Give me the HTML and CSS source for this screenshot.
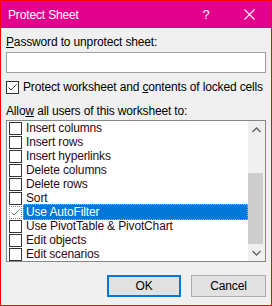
FILE: index.html
```html
<!DOCTYPE html>
<html>
<head>
    <meta charset="UTF-8">
    <title>Protect Sheet</title>
    <link rel="stylesheet" href="styles.css">
</head>
<body>
    <div class="dialog">
        <div class="titlebar">
            <span class="title">Protect Sheet</span>
            <span class="help">?</span>
            <svg class="close" width="11" height="11" viewBox="0 0 11 11">
                <path d="M0.5 0.5 L10.5 10.5 M10.5 0.5 L0.5 10.5" stroke="#fff" stroke-width="1.1" fill="none"/>
            </svg>
        </div>

        <div class="content">
            <div class="label"><u>P</u>assword to unprotect sheet:</div>
            <input class="password" type="password">

            <div class="check-row">
                <span class="box">
                    <svg width="11" height="11" viewBox="0 0 11 11"><path d="M1.5 5.5 L4 8 L9.5 2.5" stroke="#444" stroke-width="1" fill="none"/></svg>
                </span>
                <span>Protect worksheet and <u>c</u>ontents of locked cells</span>
            </div>

            <div class="label allow">Allo<u>w</u> all users of this worksheet to:</div>

            <div class="listbox">
                <div class="items">
                    <div class="item"><span class="box"></span><span class="text">Insert columns</span></div>
                    <div class="item"><span class="box"></span><span class="text">Insert rows</span></div>
                    <div class="item"><span class="box"></span><span class="text">Insert hyperlinks</span></div>
                    <div class="item"><span class="box"></span><span class="text">Delete columns</span></div>
                    <div class="item"><span class="box"></span><span class="text">Delete rows</span></div>
                    <div class="item"><span class="box"></span><span class="text">Sort</span></div>
                    <div class="item selected">
                        <span class="box">
                            <svg width="11" height="11" viewBox="0 0 11 11"><path d="M1.5 5.5 L4 8 L9.5 2.5" stroke="#777" stroke-width="1" fill="none"/></svg>
                        </span>
                        <span class="text">Use AutoFilter</span>
                    </div>
                    <div class="item"><span class="box"></span><span class="text">Use PivotTable &amp; PivotChart</span></div>
                    <div class="item"><span class="box"></span><span class="text">Edit objects</span></div>
                    <div class="item"><span class="box"></span><span class="text">Edit scenarios</span></div>
                </div>
                <div class="scrollbar">
                    <div class="arrow">
                        <svg width="9" height="6" viewBox="0 0 9 6"><path d="M0.5 5 L4.5 1 L8.5 5" stroke="#606060" stroke-width="1.3" fill="none"/></svg>
                    </div>
                    <div class="track"><div class="thumb"></div></div>
                    <div class="arrow">
                        <svg width="9" height="6" viewBox="0 0 9 6"><path d="M0.5 1 L4.5 5 L8.5 1" stroke="#606060" stroke-width="1.3" fill="none"/></svg>
                    </div>
                </div>
            </div>

            <div class="buttons">
                <button class="btn default">OK</button>
                <button class="btn">Cancel</button>
            </div>
        </div>
    </div>
</body>
</html>
```

FILE: styles.css
```css
body {
    margin: 0;
    font-family: "Liberation Sans", Arial, sans-serif;
    font-size: 12px;
    letter-spacing: -0.15px;
    color: #000;
}
.dialog {
    width: 272px;
    height: 306px;
    box-sizing: border-box;
    border: 1px solid #f00;
    background: #f0f0f0;
    overflow: hidden;
}
.titlebar {
    height: 27px;
    background: #e3008c;
    color: #fff;
    display: flex;
    align-items: center;
    padding: 0 16px 0 7px;
}
.title {
    flex: 1;
}
.help {
    width: 10px;
    text-align: center;
    margin-right: 33px;
    font-size: 13px;
}
.close {
    display: block;
}
.content {
    padding: 6px 5px 0 5px;
}
.label {
    line-height: 16px;
    white-space: nowrap;
}
.password {
    display: block;
    width: 100%;
    height: 21px;
    box-sizing: border-box;
    margin: 2px 0 0 0;
    border: 1px solid #a0a0a0;
    background: #fff;
}
.check-row {
    display: flex;
    align-items: center;
    line-height: 16px;
    margin-top: 6px;
    white-space: nowrap;
}
.check-row .box {
    margin-right: 4px;
}
.box {
    width: 13px;
    height: 13px;
    box-sizing: border-box;
    border: 1px solid #333;
    background: #fff;
    display: flex;
    align-items: center;
    justify-content: center;
    flex-shrink: 0;
}
.box svg {
    display: block;
}
.allow {
    margin-top: 8px;
}
.listbox {
    display: flex;
    margin-top: 1px;
    border: 1px solid #828790;
    background: #fff;
    height: 142px;
    box-sizing: border-box;
}
.items {
    flex: 1;
}
.item {
    display: flex;
    height: 14px;
    line-height: 14px;
    padding-left: 2px;
    color: #2b0a14;
    white-space: nowrap;
}
.item .box {
    margin: 1px 1px 0 0;
}
.item .text {
    flex: 1;
    padding-left: 2px;
    border: 1px solid transparent;
    margin: -1px 0;
    line-height: 14px;
}
.item.selected .text {
    background: #0078d7;
    color: #fff;
    border: 1px dotted #e8a040;
}
.item.selected .box {
    border-color: #888;
    border-style: dotted;
}
.scrollbar {
    width: 17px;
    background: #f0f0f0;
    display: flex;
    flex-direction: column;
}
.arrow {
    height: 17px;
    display: flex;
    align-items: center;
    justify-content: center;
}
.track {
    flex: 1;
    padding-top: 35px;
}
.thumb {
    width: 15px;
    height: 71px;
    background: #cdcdcd;
}
.buttons {
    display: flex;
    justify-content: flex-end;
    gap: 10px;
    margin-top: 13px;
}
.btn {
    height: 22px;
    width: 75px;
    box-sizing: border-box;
    border: 1px solid #adadad;
    background: #e1e1e1;
    font-family: inherit;
    font-size: 12px;
    letter-spacing: -0.15px;
    color: #000;
    padding: 0;
}
.btn.default {
    width: 74px;
    border: 2px solid #0078d7;
}
```
